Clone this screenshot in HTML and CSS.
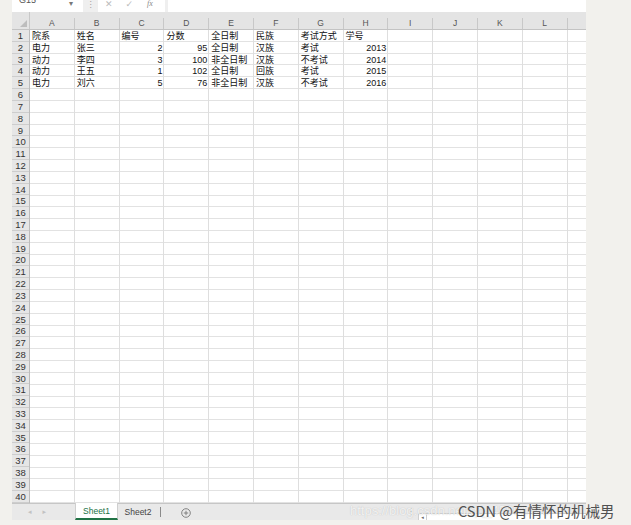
FILE: index.html
```html
<!DOCTYPE html>
<html lang="zh">
<head>
<meta charset="utf-8">
<title>Sheet</title>
<link rel="stylesheet" href="styles.css">
</head>
<body>
<div class="app">
  <div class="fbar">
    <div class="namebox"><span class="ref">G15</span><span class="dd">&#9662;</span></div>
    <div class="vsep">&#8942;</div>
    <div class="fbtns"><span class="fb-x">&#10005;</span><span class="fb-ok">&#10003;</span><span class="fx">fx</span></div>
    <div class="finput"></div>
  </div>
  <div class="colhead">
    <div class="corner"><span class="tri"></span></div>
    <div class="ch">A</div><div class="ch">B</div><div class="ch">C</div><div class="ch">D</div>
    <div class="ch">E</div><div class="ch">F</div><div class="ch">G</div><div class="ch">H</div>
    <div class="ch">I</div><div class="ch">J</div><div class="ch">K</div><div class="ch">L</div>
    <div class="ch rest"></div>
  </div>
  <div class="grid">
    <div class="rowheads">
      <div>1</div><div>2</div><div>3</div><div>4</div><div>5</div><div>6</div><div>7</div><div>8</div><div>9</div><div>10</div>
      <div>11</div><div>12</div><div>13</div><div>14</div><div>15</div><div>16</div><div>17</div><div>18</div><div>19</div><div>20</div>
      <div>21</div><div>22</div><div>23</div><div>24</div><div>25</div><div>26</div><div>27</div><div>28</div><div>29</div><div>30</div>
      <div>31</div><div>32</div><div>33</div><div>34</div><div>35</div><div>36</div><div>37</div><div>38</div><div>39</div><div>40</div>
    </div>
    <div class="cells">
      <div class="data">
        <div>院系</div><div>姓名</div><div>编号</div><div>分数</div><div>全日制</div><div>民族</div><div>考试方式</div><div>学号</div>
        <div>电力</div><div>张三</div><div class="num">2</div><div class="num">95</div><div>全日制</div><div>汉族</div><div>考试</div><div class="num">2013</div>
        <div>动力</div><div>李四</div><div class="num">3</div><div class="num">100</div><div>非全日制</div><div>汉族</div><div>不考试</div><div class="num">2014</div>
        <div>动力</div><div>王五</div><div class="num">1</div><div class="num">102</div><div>全日制</div><div>回族</div><div>考试</div><div class="num">2015</div>
        <div>电力</div><div>刘六</div><div class="num">5</div><div class="num">76</div><div>非全日制</div><div>汉族</div><div>不考试</div><div class="num">2016</div>
      </div>
    </div>
  </div>
  <div class="tabs">
    <div class="nav"><span>&#9666;</span><span>&#9656;</span></div>
    <div class="tab active">Sheet1</div>
    <div class="tab">Sheet2</div>
    <div class="tabsep"></div>
    <div class="add"><svg width="10" height="10" viewBox="0 0 10 10"><circle cx="5" cy="5" r="4.3" fill="none" stroke="#777" stroke-width="0.9"/><path d="M5 2.8v4.4M2.8 5h4.4" stroke="#777" stroke-width="0.9"/></svg></div>
    <div class="spacer"></div>
    <div class="dots">&#8942;</div>
    <div class="hscroll"><span class="hs-arrow">&#9666;</span><div class="hs-track"></div></div>
  </div>
</div>
<div class="watermark"><span class="url">https://blog.csdn.net/qq_45691483</span><span class="csdn">CSDN @有情怀的机械男</span></div>
</body>
</html>
```
FILE: styles.css
```css
html, body {
  margin: 0;
  padding: 0;
}
body {
  width: 631px;
  height: 525px;
  overflow: hidden;
  background: #f2f1ed;
  font-family: "Noto Sans CJK SC", "Liberation Sans", sans-serif;
  position: relative;
}
.app {
  margin-left: 12px;
  width: 574px;
}
/* formula bar */
.fbar {
  height: 12px;
  display: flex;
  background: #efefef;
}
.namebox {
  width: 71px;
  background: #fff;
  position: relative;
  overflow: hidden;
}
.ref {
  position: absolute;
  left: 7px;
  top: -6px;
  font: 9px/12px "Liberation Sans", sans-serif;
  color: #555;
}
.dd {
  position: absolute;
  left: 57px;
  top: -1px;
  font: 8px/10px "DejaVu Sans", sans-serif;
  color: #777;
}
.vsep {
  width: 15px;
  text-align: center;
  font: 8px/10px "DejaVu Sans", sans-serif;
  color: #999;
}
.fbtns {
  width: 67px;
  background: #fff;
  display: flex;
  align-items: flex-start;
  color: #bbb;
  font: 9px/9px "DejaVu Sans", sans-serif;
}
.fb-x { margin-left: 7px; }
.fb-ok { margin-left: 13px; }
.fx {
  margin-left: 14px;
  font: italic 8px/8px "Liberation Serif", serif;
  color: #888;
}
.finput {
  flex: 1;
  margin-left: 3px;
  background: #fff;
}
/* column header */
.colhead {
  height: 18px;
  display: flex;
  align-items: flex-end;
  background: #e4e4e4;
  border-bottom: 1px solid #c3c3c3;
  box-sizing: border-box;
}
.corner {
  width: 18px;
  height: 17px;
  box-sizing: border-box;
  border-right: 1px solid #c8c8c8;
  position: relative;
}
.tri {
  position: absolute;
  right: 2px;
  bottom: 2px;
  width: 0;
  height: 0;
  border-left: 7px solid transparent;
  border-bottom: 7px solid #bdbdbd;
}
.ch {
  width: 44.8px;
  height: 11px;
  box-sizing: border-box;
  border-right: 1px solid #c8c8c8;
  text-align: center;
  font: 8.5px/11px "Liberation Sans", sans-serif;
  color: #555;
  flex: none;
}
.ch.rest {
  flex: 1;
  border-right: 0;
}
/* grid body */
.grid {
  display: flex;
  height: 473px;
}
.rowheads {
  width: 18px;
  background: #e6e6e6;
  border-right: 1px solid #bcbcbc;
  box-sizing: border-box;
  flex: none;
}
.rowheads div {
  height: 11.825px;
  box-sizing: border-box;
  border-bottom: 1px solid #cdcdcd;
  text-align: center;
  font: 9.5px/11.5px "Liberation Sans", sans-serif;
  color: #333;
}
.cells {
  flex: 1;
  background-color: #fff;
  background-image:
    repeating-linear-gradient(to right, transparent 0 43.8px, #dedede 43.8px 44.8px),
    repeating-linear-gradient(to bottom, transparent 0 10.825px, #e2e2e2 10.825px 11.825px);
}
.data {
  display: grid;
  grid-template-columns: repeat(8, 44.8px);
  grid-auto-rows: 11.825px;
  font-size: 9px;
  line-height: 12px;
  color: #111;
}
.data div {
  padding: 0 2px;
  white-space: nowrap;
  overflow: visible;
}
.data .num {
  text-align: right;
  padding-right: 2px;
  font-family: "Liberation Sans", sans-serif;
  font-size: 9px;
}
/* sheet tabs */
.tabs {
  height: 17px;
  display: flex;
  background: #e9e9e9;
  border-top: 1px solid #c6c6c6;
  box-sizing: border-box;
  font: 8.5px/16px "Liberation Sans", sans-serif;
}
.nav {
  width: 63px;
  display: flex;
  color: #c2c2c2;
  font: 7px/16px "DejaVu Sans", sans-serif;
}
.nav span:first-child { margin-left: 16px; }
.nav span:last-child { margin-left: 11px; }
.tab {
  width: 43px;
  text-align: center;
  color: #444;
  box-sizing: border-box;
}
.tab.active {
  background: #fff;
  color: #217346;
  border-left: 1px solid #cfcfcf;
  border-right: 1px solid #cfcfcf;
  border-bottom: 2px solid #217346;
  margin-top: -1px;
  line-height: 16px;
}
.tab:not(.active) {
  width: 38px;
  margin-left: 1px;
}
.tabsep {
  width: 1px;
  height: 10px;
  margin: 3px 0 0 3px;
  background: #8a8a8a;
}
.add {
  margin-left: 20px;
  padding-top: 3px;
}
.spacer { flex: 1; }
.dots {
  width: 14px;
  color: #999;
  font: 8px/16px "DejaVu Sans", sans-serif;
  text-align: center;
}
.hscroll {
  width: 168px;
  display: flex;
  align-items: flex-end;
}
.hs-arrow {
  width: 7px;
  height: 6px;
  font: 5px/6px "DejaVu Sans", sans-serif;
  color: #666;
  background: #fff;
  border: 1px solid #cfcfcf;
  border-bottom: 0;
  text-align: center;
}
.hs-track {
  flex: 1;
  height: 6px;
  background: #fff;
  border-top: 1px solid #cfcfcf;
}
/* watermark overlay */
.watermark {
  position: absolute;
  left: 350px;
  top: 502px;
  width: 275px;
  height: 18px;
}
.url {
  position: absolute;
  left: 0;
  top: 0;
  font: 13px/18px "Liberation Sans", sans-serif;
  color: rgba(255, 255, 255, 0.8);
  text-shadow: 0 0 1px rgba(120, 120, 120, 0.45);
  white-space: nowrap;
}
.csdn {
  position: absolute;
  left: 108px;
  top: 0;
  font: 14.5px/18px "Noto Sans CJK SC", sans-serif;
  color: #505050;
  white-space: nowrap;
}
```
